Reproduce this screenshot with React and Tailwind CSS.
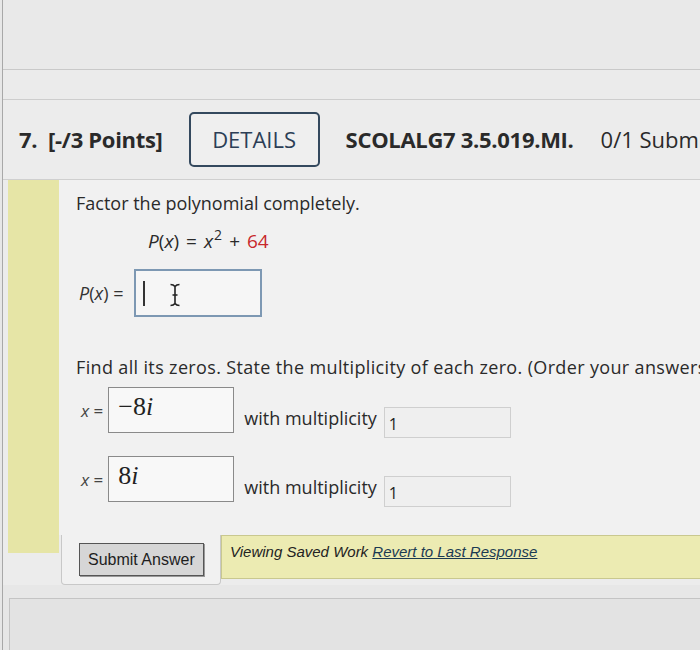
export default function App() {
  const zeros = [
    { value: '−8', mult: '1' },
    { value: '8', mult: '1' },
  ];

  return (
    <div className="w-[700px] h-[650px] overflow-hidden bg-[#e7e7e7] pl-[2px] font-['Open_Sans',sans-serif] text-[#222]">
      <div className="h-full border-l border-[#a8a8a8] flex flex-col">
        {/* previous question, bottom edge */}
        <div className="h-[70px] shrink-0 bg-[#e9e9e9] border-b border-[#c9c9c9]" />
        <div className="h-[30px] shrink-0 bg-[#ebebeb] border-b border-[#cdcdcd]" />

        {/* question card */}
        <div className="bg-[#ececec] shrink-0">
          <div className="h-[80px] flex items-center pl-[16px] border-b border-[#cfcfcf] whitespace-nowrap">
            <span className="shrink-0 text-[22px] font-bold text-[#2a2a2a] tracking-[-0.3px]">7.&nbsp; [-/3 Points]</span>
            <div className="shrink-0 ml-[26px] w-[131px] h-[55px] border-2 border-[#34495e] rounded-[5px] flex items-center justify-center bg-[#efefef]">
              <span className="text-[22px] text-[#2c3e56]">DETAILS</span>
            </div>
            <span className="shrink-0 ml-[26px] text-[22px] font-bold text-[#2a2a2a] tracking-[-0.3px]">SCOLALG7 3.5.019.MI.</span>
            <span className="shrink-0 ml-[27px] text-[22px] text-[#2a2a2a]">0/1 Submissions Used</span>
          </div>

          <div className="flex">
            <div className="ml-[5px] w-[51px] h-[373px] shrink-0 bg-[#e6e5a6]" />
            <div className="flex-1 flex flex-col">
              <div className="bg-[#f1f1f1] h-[355px] pl-[17px] pt-[11px] text-[18px]">
                <div className="leading-[24px] text-[#2a2a2a]">Factor the polynomial completely.</div>
                <div className="mt-[14px] ml-[72px] leading-[24px] text-[#2a2a2a] text-[19px] flex items-baseline">
                  <i>P</i>(<i>x</i>)
                  <span className="mx-[7px]">=</span>
                  <i>x</i><sup className="text-[14px] relative top-[-8px] ml-[1px]">2</sup>
                  <span className="mx-[7px]">+</span>
                  <span className="text-[#c8282c]">64</span>
                </div>

                <div className="mt-[16px] flex items-center">
                  <span className="ml-[3px] text-[18px] text-[#333]"><i>P</i>(<i>x</i>) =</span>
                  <div className="ml-[11px] w-[128px] h-[48px] border-2 border-[#7d98b3] bg-[#f6f6f6] flex items-center">
                    <div className="ml-[7px] w-[2px] h-[25px] bg-[#333]" />
                    <svg className="ml-[24px] mt-[4px]" width="12" height="24" viewBox="0 0 12 24">
                      <path d="M1.5 1.5 Q4.5 1.5 6 3.5 Q7.5 1.5 10.5 1.5 M6 3.5 L6 20.5 M1.5 22.5 Q4.5 22.5 6 20.5 Q7.5 22.5 10.5 22.5 M3.5 12 L8.5 12" stroke="#222" strokeWidth="1.6" fill="none" />
                    </svg>
                  </div>
                </div>

                <div className="mt-[38px] leading-[24px] whitespace-nowrap text-[#2a2a2a] tracking-[0.35px]">
                  Find all its zeros. State the multiplicity of each zero. (Order your answers from smallest to largest.)
                </div>

                <div className="mt-[8px] flex flex-col gap-[18px]">
                  {zeros.map((z) => (
                    <div key={z.value} className="flex items-start">
                      <span className="ml-[5px] mt-[11px] text-[17px] text-[#444]"><i>x</i> =</span>
                      <div className="ml-[5px] w-[126px] h-[46px] border border-[#8a8a8a] bg-[#f8f8f8] pl-[9px] pt-[4px] font-['Liberation_Serif',serif] text-[26px] leading-[30px] text-[#222]">
                        {z.value}<i>i</i>
                      </div>
                      <span className="ml-[10px] mt-[18px] text-[18px] text-[#2a2a2a]">with multiplicity</span>
                      <div className="ml-[7px] mt-[20px] w-[127px] h-[31px] border border-[#cfcfcf] bg-[#efefef] pl-[4px] pt-[4px] text-[16px] text-[#222]">
                        {z.mult}
                      </div>
                    </div>
                  ))}
                </div>
              </div>

              <div className="flex items-start">
                <div className="w-[160px] shrink-0 h-[50px] bg-[#f1f1f1] border border-t-0 border-[#c8c8c8] rounded-bl-[4px] rounded-br-[4px] ml-[2px] pl-[17px] pt-[8px]">
                  <button className="h-[33px] px-[8px] bg-[#d6d6d6] border border-[#555] shadow-[1px_1px_0_#999] font-['Liberation_Sans',sans-serif] text-[16px] text-[#1e1e1e] whitespace-nowrap">
                    Submit Answer
                  </button>
                </div>
                <div className="flex-1 h-[44px] bg-[#ecebb2] border border-[#c9c88f] border-r-0 pl-[8px] pt-[5px] font-['Liberation_Sans',sans-serif] italic text-[15px] text-[#222] whitespace-nowrap">
                  Viewing Saved Work <span className="underline text-[#1b3a52]">Revert to Last Response</span>
                </div>
              </div>
            </div>
          </div>
        </div>

        <div className="h-[13px] shrink-0" />
        <div className="flex-1 ml-[6px] bg-[#e3e3e3] border-t border-l border-[#c4c4c4]" />
      </div>
    </div>
  );
}
